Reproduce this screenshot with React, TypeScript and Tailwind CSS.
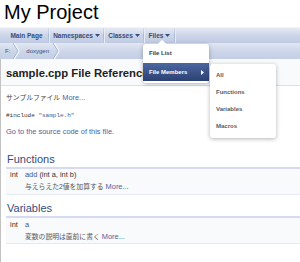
import React from "react";

const Sep = () => (
  <div className="h-full w-[2px] flex">
    <div className="h-full w-[1px] bg-linear-to-b from-[#d4dcec] via-[#a9b8d9] to-[#b9c6e0]" />
    <div className="h-full w-[1px] bg-[#e6ebf5]" />
  </div>
);

const Caret = () => (
  <svg width="5" height="3" viewBox="0 0 5 3" className="ml-[2px]">
    <path d="M0 0 L5 0 L2.5 3 Z" fill="#364D7C" />
  </svg>
);

const Chevron = () => (
  <svg width="8" height="16" viewBox="0 0 8 16" className="shrink-0">
    <path d="M1 0 L6 8 L1 16" fill="none" stroke="#ffffff" strokeWidth="1.2" />
    <path d="M0 0 L5 8 L0 16" fill="none" stroke="#a3b3d6" strokeWidth="1" />
  </svg>
);

export default function App() {
  const font = { fontFamily: '"Liberation Sans", "Noto Sans CJK JP", sans-serif' };
  return (
    <div className="relative w-[300px] h-[262px] overflow-hidden bg-white" style={font}>
      {/* Title */}
      <div className="h-[27px] pl-[4px] text-[20px] leading-[25px] text-black">My Project</div>

      {/* Nav tabs */}
      <div className="h-[16px] flex items-stretch pl-[5px] bg-linear-to-b from-[#e6eaf4] via-[#ccd5e8] to-[#bfcbe3] border-t border-[#f1f3f9] text-[6.5px] font-bold text-[#364D7C]">
        <div className="w-[43px] flex items-center justify-center">Main Page</div>
        <Sep />
        <div className="w-[53px] flex items-center justify-center">Namespaces<Caret /></div>
        <Sep />
        <div className="w-[38px] flex items-center justify-center">Classes<Caret /></div>
        <Sep />
        <div className="w-[29px] flex items-center justify-center">Files<Caret /></div>
        <Sep />
      </div>

      {/* Breadcrumb */}
      <div className="h-[16px] flex items-center pl-[5px] bg-linear-to-b from-[#e2e7f2] via-[#cdd6e9] to-[#c3cee5] text-[6px] text-[#364D7C]">
        <span>F:</span>
        <span className="ml-[3px]"><Chevron /></span>
        <span className="ml-[5px]">doxygen</span>
        <span className="ml-[4px]"><Chevron /></span>
      </div>

      {/* Content */}
      <div className="border-l border-[#c2c2c2] h-[203px]">
        <div className="h-[27px] bg-[#f9fafc] border-b border-[#d8dfee] flex items-center pl-[5px] pt-[2px]">
          <span className="text-[11.3px] font-bold text-[#222] whitespace-nowrap">sample.cpp File Reference</span>
        </div>
        <div className="pl-[5px]">
          <div className="mt-[6px] h-[12px] leading-[12px] text-[7.4px] text-[#444]">
            <span className="text-[6.8px]">サンプルファイル</span>{" "}
            <span className="text-[#4665A2]">More...</span>
          </div>
          <div className="mt-[6px] h-[12px] leading-[12px] text-[6px] text-[#333]" style={{ fontFamily: '"Liberation Mono", monospace' }}>
            #include <span className="text-[#3D578C]">"sample.h"</span>
          </div>
          <div className="mt-[4px] h-[12px] leading-[12px] text-[7.4px]">
            <span className="text-[#4665A2]">Go to the source code of this file.</span>
          </div>

          <div className="mt-[14px] h-[15px] leading-[15px] text-[11px] text-[#354C7B] pl-[1px]">Functions</div>
          <div className="h-[2px] bg-[#d6dbef]" />
          <div className="bg-[#f9fafc] border-b border-[#e6e9f2] pb-[1px] text-[7.4px] leading-[12px]">
            <div className="flex">
              <span className="w-[19px] pl-[4px] text-[#333]">int</span>
              <span><span className="text-[#3D578C]">add</span> <span className="text-[#333]">(int a, int b)</span></span>
            </div>
            <div className="pl-[19px] text-[#555]">
              <span className="text-[6.8px]">与えらえた2値を加算する</span>{" "}
              <span className="text-[#4665A2]">More...</span>
            </div>
          </div>

          <div className="mt-[6px] h-[15px] leading-[15px] text-[11px] text-[#354C7B] pl-[1px]">Variables</div>
          <div className="h-[2px] bg-[#d6dbef]" />
          <div className="bg-[#f9fafc] border-b border-[#e6e9f2] pt-[1px] pb-[1px] text-[7.4px] leading-[11.5px]">
            <div className="flex">
              <span className="w-[19px] pl-[4px] text-[#333]">int</span>
              <span className="text-[#3D578C]">a</span>
            </div>
            <div className="pl-[19px] text-[#555]">
              <span className="text-[6.8px]">変数の説明は直前に書く</span>{" "}
              <span className="text-[#4665A2]">More...</span>
            </div>
          </div>
        </div>
      </div>

      {/* Files dropdown */}
      <div className="absolute left-[143px] top-[44px] w-[66px] rounded-[3px] bg-white shadow-[0_1px_4px_rgba(0,0,0,0.3)] pb-[2px] text-[6px] font-bold">
        <div className="absolute left-[16px] top-[-3px] w-[6px] h-[6px] bg-white rotate-45" />
        <div className="relative h-[19px] flex items-center pl-[6px] text-[#283A5D]">File List</div>
        <div className="relative h-[18px] flex items-center justify-between pl-[6px] pr-[5px] text-white bg-linear-to-b from-[#4c67a0] to-[#2c4173]">
          <span>File Members</span>
          <svg width="3" height="5" viewBox="0 0 3 5"><path d="M0 0 L3 2.5 L0 5 Z" fill="#ffffff" /></svg>
        </div>
      </div>

      {/* Sub menu */}
      <div className="absolute left-[210px] top-[64px] w-[66px] rounded-[3px] bg-white shadow-[0_1px_4px_rgba(0,0,0,0.3)] pt-[3px] pb-[3px] text-[6px] font-bold text-[#555b66]">
        <div className="h-[17px] flex items-center pl-[6px]">All</div>
        <div className="h-[17px] flex items-center pl-[6px]">Functions</div>
        <div className="h-[17px] flex items-center pl-[6px]">Variables</div>
        <div className="h-[17px] flex items-center pl-[6px]">Macros</div>
      </div>
    </div>
  );
}
